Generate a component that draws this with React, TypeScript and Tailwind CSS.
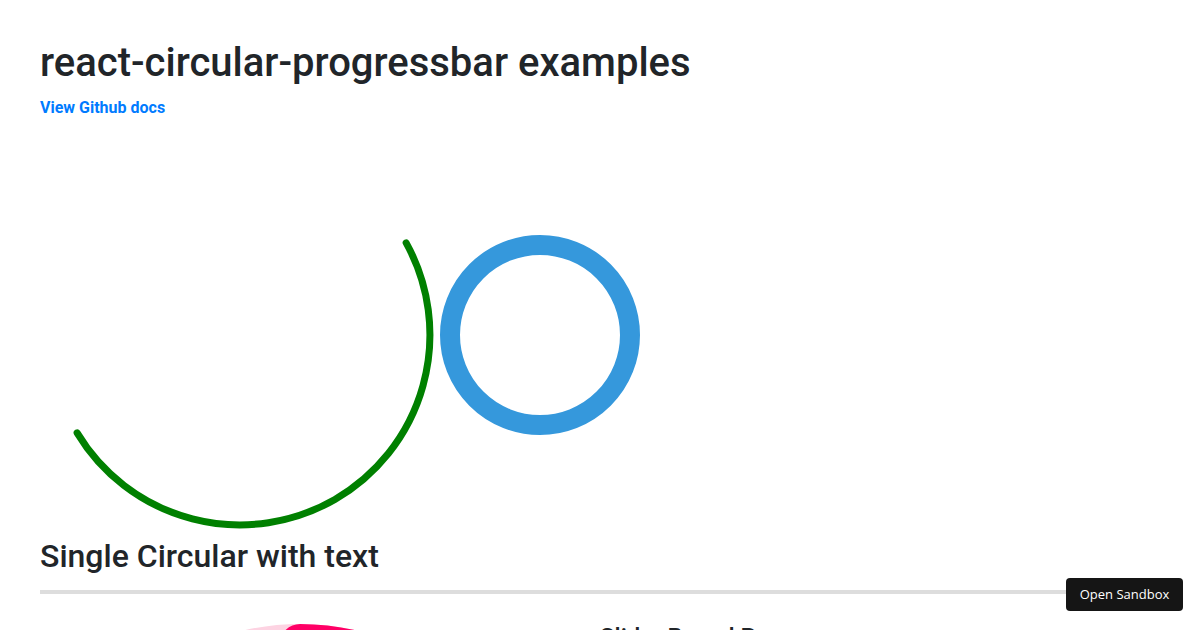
import React from "react";

// green half-circle arc: about 178deg of a r=47.5 circle, starting up-right
function GreenArc() {
  return (
    <svg viewBox="0 0 100 100" className="h-[400px] w-[400px] shrink-0">
      <path
        d="M 91.54 26.97 A 47.5 47.5 0 0 1 9.28 74.46"
        fill="none"
        stroke="#008000"
        strokeWidth={1.75}
        strokeLinecap="round"
      />
    </svg>
  );
}

function BlueRing() {
  return (
    <svg viewBox="0 0 200 200" className="h-[200px] w-[200px] shrink-0">
      <circle cx="100" cy="100" r="90" fill="none" stroke="#3598dc" strokeWidth={20} />
    </svg>
  );
}

function PinkProgress({ value }: { value: number }) {
  const r = 46;
  const c = 2 * Math.PI * r;
  return (
    <svg viewBox="0 0 100 100" className="h-[500px] w-[500px]">
      <circle cx="50" cy="50" r={r} fill="none" stroke="#fdd3e2" strokeWidth={8} />
      <circle
        cx="50"
        cy="50"
        r={r}
        fill="none"
        stroke="#ff0066"
        strokeWidth={8}
        strokeLinecap="round"
        strokeDasharray={`${c} ${c}`}
        strokeDashoffset={c * (1 - value / 100)}
        transform="rotate(-90 50 50)"
      />
    </svg>
  );
}

export default function App() {
  return (
    <div className="relative h-[630px] w-full overflow-hidden bg-white font-['Roboto',sans-serif] text-[#212529]">
      <div className="px-10 pt-[39px]">
        <h1 className="text-[40px] font-medium leading-[48px]">react-circular-progressbar examples</h1>
        <a href="#" className="mt-[9px] block text-base font-bold leading-6 text-[#007bff]">
          View Github docs
        </a>

        <div className="mt-[15px] flex h-[400px] items-center">
          <GreenArc />
          <BlueRing />
        </div>

        <h2 className="mt-[2px] text-[32px] font-medium leading-[38px]">Single Circular with text</h2>
        <div className="mt-[15px] h-1 w-full bg-[#dddddd]" />

        <div className="mt-[30px] grid grid-cols-2">
          <div className="flex justify-center pr-10">
            <PinkProgress value={38} />
          </div>
          <div>
            <h3 className="mt-[-1px] text-2xl font-medium leading-[29px]">Slider Based Progress</h3>
          </div>
        </div>
      </div>

      <button className="absolute bottom-[19px] right-[17px] flex h-[33px] w-[117px] items-center justify-center rounded bg-[#151515] font-['Open_Sans',sans-serif] text-[13px] text-white">
        Open Sandbox
      </button>
    </div>
  );
}
